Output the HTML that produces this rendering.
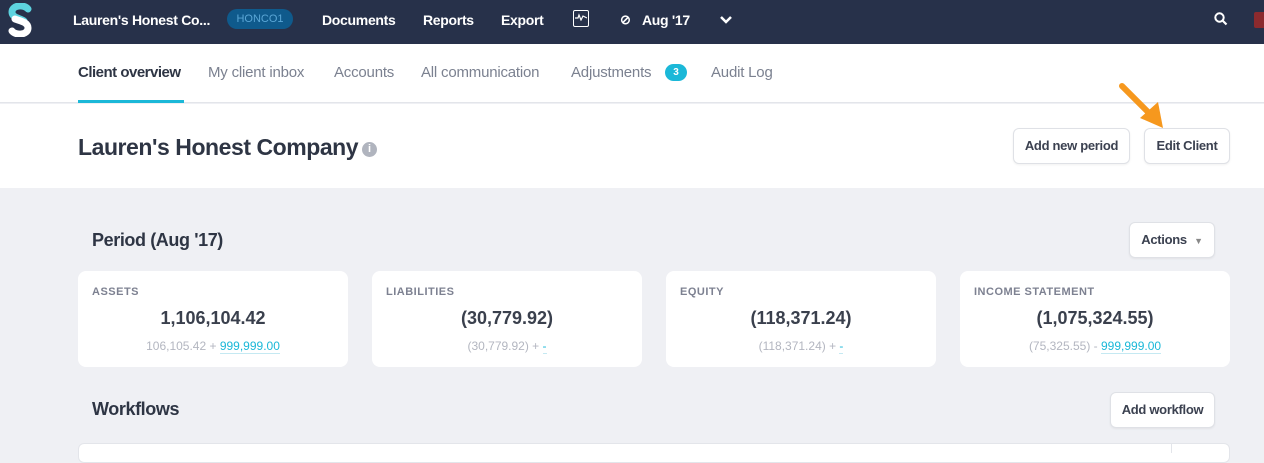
<!DOCTYPE html>
<html><head><meta charset="utf-8"><style>
*{margin:0;padding:0;box-sizing:border-box}
body{width:1264px;height:450px;overflow:hidden;font-family:"Liberation Sans",sans-serif;background:#eff0f4;position:relative;color:#333a48}
.a{position:absolute;white-space:nowrap}
.top{left:0;top:0;width:1264px;height:44px;background:#27314a}
.nav{color:#fff;font-size:14px;font-weight:bold;top:12px;letter-spacing:-.3px}
.tabs{left:0;top:44px;width:1264px;height:59px;background:#fff;border-bottom:1px solid #e3e5ea}
.tab{top:64px;font-size:15px;color:#7b8190;letter-spacing:-.2px}
.hdr{left:0;top:104px;width:1264px;height:84px;background:#fff}
.btn{background:#fff;border:1px solid #dfe1e6;border-radius:6px;font-size:13px;font-weight:bold;color:#3b4150;text-align:center;box-shadow:0 1px 2px rgba(0,0,0,.06);letter-spacing:-.3px}
.card{top:271px;width:270px;height:96px;background:#fff;border-radius:8px}
.lab{position:absolute;left:14px;top:15px;font-size:11px;font-weight:bold;color:#7d8191;letter-spacing:.5px}
.val{position:absolute;left:0;width:100%;text-align:center;top:37px;font-size:18px;font-weight:bold;color:#3a404d}
.sub{position:absolute;left:0;width:100%;text-align:center;top:68px;font-size:12px;color:#b3b6c0}
.sub b{font-weight:normal;color:#1bb8d8;border-bottom:1px solid #c5e9f2}
</style></head><body>
<div class="a top"></div>
<svg class="a" style="left:8px;top:3px" width="24" height="34" viewBox="0 0 24 34"><path d="M20 6 C16 1 4 2 4 9 C4 15 12 15 16 18" stroke="#5dd3df" stroke-width="7" fill="none" stroke-linecap="round"/><path d="M7 16 C12 18 20 19 20 25 C20 32 8 33 4 28" stroke="#fff" stroke-width="7" fill="none" stroke-linecap="round"/></svg>
<div class="a nav" style="left:73px">Lauren's Honest Co...</div>
<div class="a" style="left:227px;top:9px;width:66px;height:20px;border-radius:10px;background:#0f5a8c;color:#5aa6d6;font-size:11px;text-align:center;line-height:20px">HONCO1</div>
<div class="a nav" style="left:322px">Documents</div>
<div class="a nav" style="left:423px">Reports</div>
<div class="a nav" style="left:501px">Export</div>
<div class="a" style="left:573px;top:10px;width:16px;height:17px;border:1.5px solid #fff;border-radius:2px"></div>
<svg class="a" style="left:575px;top:13px" width="12" height="8"><path d="M0 5 L3 5 L4 2 L6 7 L8 3 L12 5" stroke="#fff" fill="none" stroke-width="1.2"/></svg>
<div class="a nav" style="left:620px;font-size:13px">⊘</div>
<div class="a nav" style="left:642px">Aug '17</div>
<svg class="a" style="left:720px;top:15px" width="12" height="10"><path d="M1 2 L6 7 L11 2" stroke="#fff" stroke-width="2.5" fill="none"/></svg>
<svg class="a" style="left:1214px;top:12px" width="14" height="14"><circle cx="5.5" cy="5.5" r="4.2" stroke="#fff" stroke-width="2" fill="none"/><path d="M8.5 8.5 L12.5 12.5" stroke="#fff" stroke-width="2.2"/></svg>
<div class="a" style="left:1254px;top:12px;width:12px;height:16px;background:#8c2a2e;border-radius:2px"></div>

<div class="a tabs"></div>
<div class="a tab" style="left:78px;color:#2e3544;font-weight:bold;letter-spacing:-.5px">Client overview</div>
<div class="a" style="left:78px;top:100px;width:106px;height:3px;background:#1bb8d8"></div>
<div class="a tab" style="left:208px">My client inbox</div>
<div class="a tab" style="left:334px">Accounts</div>
<div class="a tab" style="left:421px">All communication</div>
<div class="a tab" style="left:571px">Adjustments</div>
<div class="a" style="left:665px;top:64px;width:22px;height:17px;border-radius:9px;background:#1bb8d8;color:#fff;font-size:10px;font-weight:bold;text-align:center;line-height:17px">3</div>
<div class="a tab" style="left:711px">Audit Log</div>

<div class="a hdr"></div>
<div class="a" style="left:78px;top:134px;font-size:23px;font-weight:bold;color:#2e3544;letter-spacing:-.45px">Lauren's Honest Company</div>
<div class="a" style="left:362px;top:142px;width:15px;height:15px;border-radius:50%;background:#b0b4be;color:#fff;font-size:11px;font-weight:bold;text-align:center;line-height:15px">i</div>
<div class="a btn" style="left:1013px;top:128px;width:117px;height:36px;line-height:34px">Add new period</div>
<div class="a btn" style="left:1144px;top:128px;width:86px;height:36px;line-height:34px">Edit Client</div>
<svg class="a" style="left:1118px;top:82px" width="52" height="50"><path d="M4 4 L34 34" stroke="#f6981e" stroke-width="6" stroke-linecap="round"/><path d="M22 36 L45 46 L40 20 Z" fill="#f6981e"/></svg>

<div class="a" style="left:92px;top:230px;font-size:18px;font-weight:bold;color:#2e3544;letter-spacing:-.4px">Period (Aug '17)</div>
<div class="a btn" style="left:1129px;top:222px;width:86px;height:36px;line-height:34px">Actions <span style="color:#888;font-size:9px;margin-left:4px">▼</span></div>

<div class="a card" style="left:78px"><div class="lab">ASSETS</div><div class="val">1,106,104.42</div><div class="sub">106,105.42 + <b>999,999.00</b></div></div>
<div class="a card" style="left:372px"><div class="lab">LIABILITIES</div><div class="val">(30,779.92)</div><div class="sub">(30,779.92) + <b>-</b></div></div>
<div class="a card" style="left:666px"><div class="lab">EQUITY</div><div class="val">(118,371.24)</div><div class="sub">(118,371.24) + <b>-</b></div></div>
<div class="a card" style="left:960px"><div class="lab">INCOME STATEMENT</div><div class="val">(1,075,324.55)</div><div class="sub">(75,325.55) - <b>999,999.00</b></div></div>

<div class="a" style="left:92px;top:399px;font-size:18px;font-weight:bold;color:#2e3544;letter-spacing:-.4px">Workflows</div>
<div class="a btn" style="left:1110px;top:392px;width:105px;height:36px;line-height:34px">Add workflow</div>
<div class="a" style="left:78px;top:443px;width:1152px;height:20px;background:#fff;border:1px solid #e3e5ea;border-radius:6px"></div>
<div class="a" style="left:1171px;top:443px;width:1px;height:10px;background:#e3e5ea"></div>
</body></html>
